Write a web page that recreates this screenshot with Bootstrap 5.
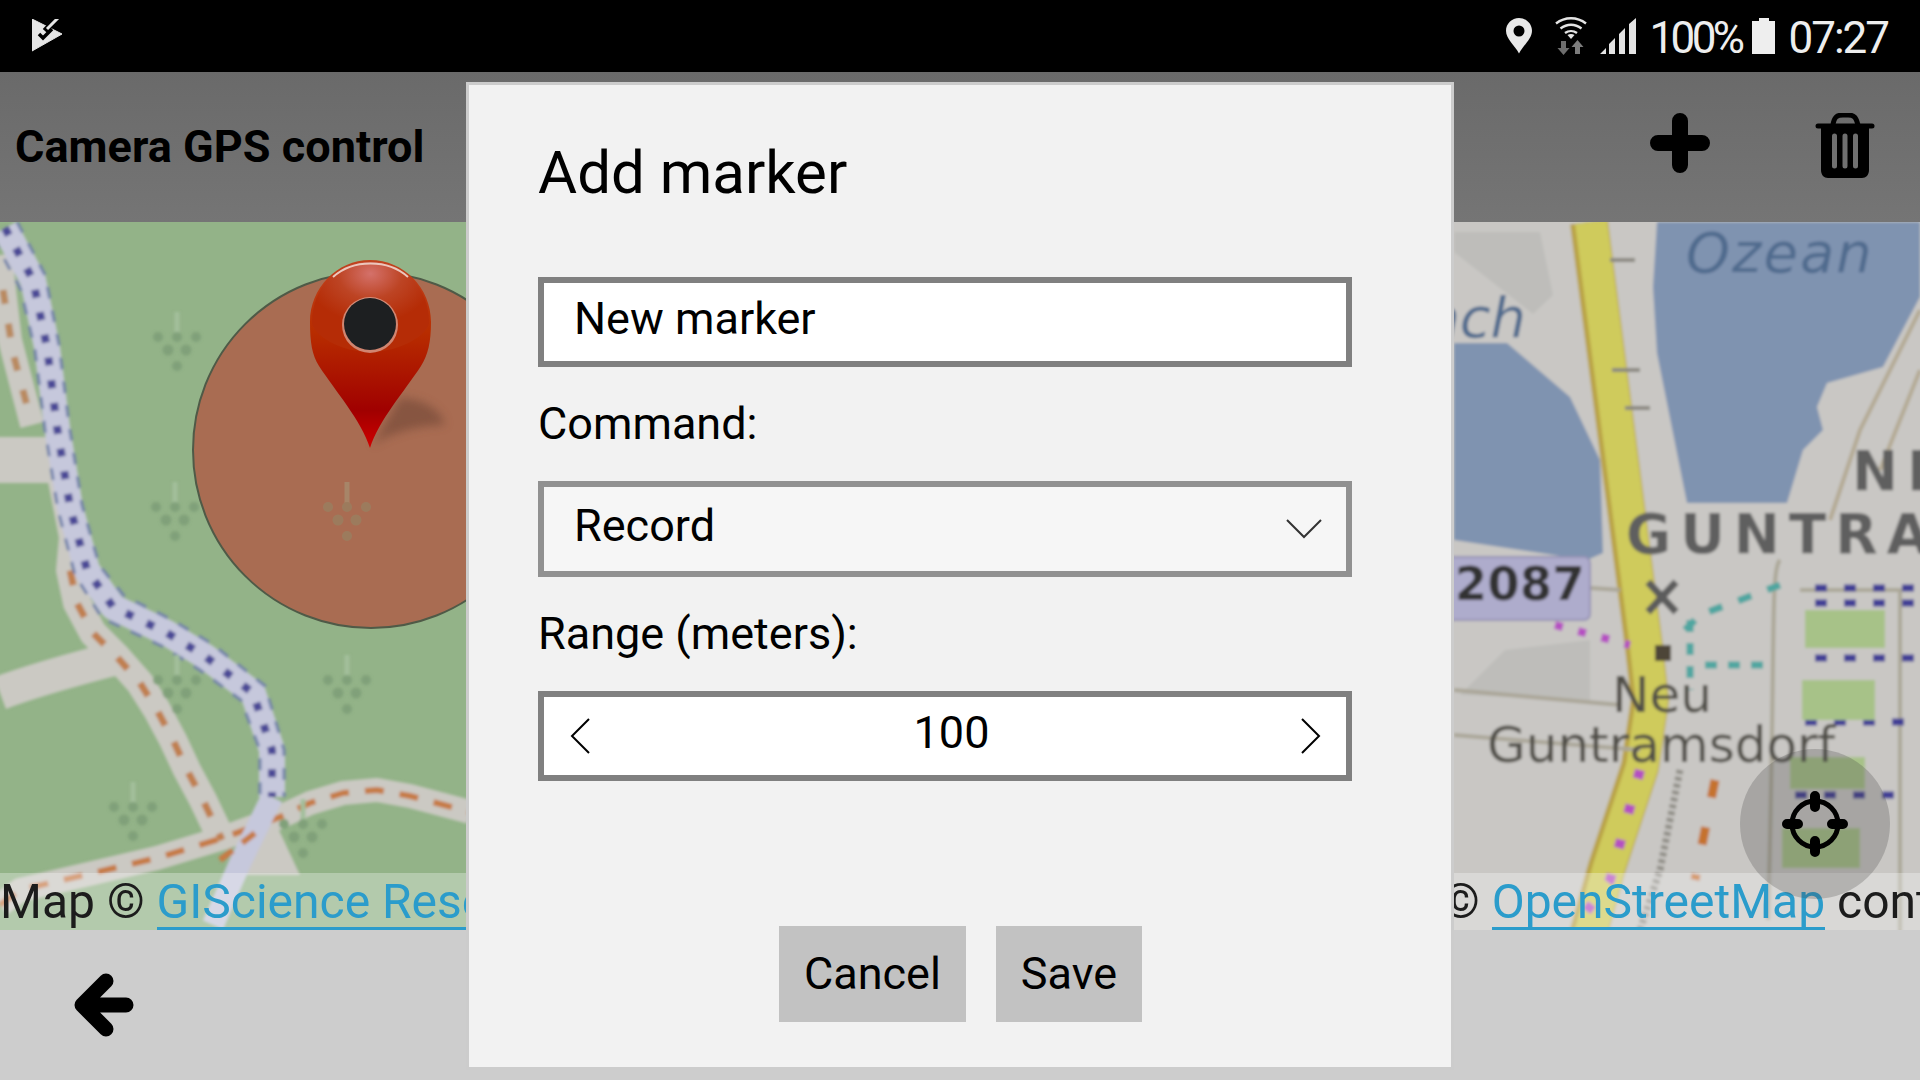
<!DOCTYPE html>
<html lang="en"><head><meta charset="utf-8"><title>Camera GPS control</title>
<link href="https://cdn.jsdelivr.net/npm/bootstrap@5.3.0/dist/css/bootstrap.min.css" rel="stylesheet">
<script src="https://cdn.jsdelivr.net/npm/bootstrap@5.3.0/dist/js/bootstrap.bundle.min.js"></script>
<style>
html,body{margin:0;width:1920px;height:1080px;overflow:hidden;background:#ccc;font-family:Roboto,"Liberation Sans",sans-serif;color:#000}
.screen{width:1920px;height:1080px}
.status-bar{height:72px;background:#000;color:#eee;padding:0 32px 0 32px}
.status-text{font-size:44px;line-height:1;font-weight:400;letter-spacing:-2px;margin-top:3px}
.status-pct{letter-spacing:-3.6px;margin-left:13px}
.status-time{margin-left:12px}
.status-batt{margin-left:11px}
.app-bar{height:150px;background:linear-gradient(#6a6a6a,#757575);padding:0 45px 0 15px}
.app-title{font-size:45px;line-height:1;font-weight:700;margin:0 0 2px;letter-spacing:.03px}
.icon-plus{margin-bottom:9px}
.icon-trash{margin-left:105px;margin-bottom:2px}
.map-area{height:708px;background:#c9c7c4}
.map-svg{display:block;width:1920px;height:708px}
.attribution{left:0;right:0;bottom:0;height:57px;background:rgba(255,255,255,.3);font-size:48px;line-height:57px;color:#1c1c1c;white-space:nowrap;overflow:hidden;padding-left:0;filter:blur(.5px)}
.attribution a{color:#2b9ccb;text-decoration:none;border-bottom:3px solid #2b9ccb;display:inline-block;line-height:50px}
.attr-left{flex:0 0 1442px;overflow:hidden}
.locate{width:150px;height:150px;left:1740px;top:527px;background:rgba(70,70,70,.26)}
.bottom-bar{height:150px;background:#cdcdcd;padding-left:74px}
.dialog{left:466px;top:82px;width:988px;height:988px;background:#f2f2f2;border:3px solid #ccc;padding:58px 99px 45px 69px}
.dialog-title{font-size:60px;line-height:1;font-weight:400;margin:0 0 74px;letter-spacing:0}
.field{height:90px;border:6px solid #808080;border-radius:0;background:#fff;font-size:45px;line-height:1;padding:0 30px;box-shadow:none;color:#000}
.field-text{padding-bottom:7px}
.field-select{height:96px;border-color:#919191;background:#f6f6f6;padding-right:24px}
.field-range{padding:0 25px 0 26px}
.field-range .val{padding:0 0 7px 12px}
.field-label{font-size:45px;line-height:1;margin:34px 0 35px;display:block;padding:0}
.dlg-actions{margin-right:-31px}
.dlg-btn{background:#c2c2c2;border:0;border-radius:0;height:96px;padding:0 25px 2px;font-size:45px;line-height:1;color:#000}
.dlg-btn:hover{background:#c2c2c2;color:#000}
.gap-30{gap:30px}
</style></head>
<body>
<div class="screen position-relative d-flex flex-column">
  <div class="status-bar d-flex align-items-center">
    <svg width="32" height="34" viewBox="0 0 32 34"><path d="M0 0 30 15 0 32Z" fill="#e6e6e6" stroke="#e6e6e6" stroke-linejoin="round"/><path d="M7 15 11 19 20 10" fill="none" stroke="#000" stroke-width="3.5"/><path d="M13 12 25 -1" fill="none" stroke="#000" stroke-width="6"/><path d="M15 10 26 -1" fill="none" stroke="#e6e6e6" stroke-width="3"/></svg>
    <div class="ms-auto d-flex align-items-center">
      <svg width="26" height="36" viewBox="0 0 26 36"><path fill-rule="evenodd" d="M13 0C5.800 0 0 5.700 0 12.800 0 21 8.500 27 13 35.500 17.500 27 26 21 26 12.800 26 5.700 20.200 0 13 0ZM13 7.500A5.500 5.500 0 1 1 13 18.500 5.500 5.500 0 0 1 13 7.500Z" fill="#e8e8e8"/></svg>
      <svg width="32" height="38" viewBox="0 0 32 38" style="margin-left:23px"><g fill="none" stroke="#e4e4e4" stroke-width="2.400"><path d="M1 6.500C10-.5 22-.5 31 6.500"/><path d="M5.500 11.500C12 6.500 20 6.500 26.500 11.500"/><path d="M10 16C13.500 13.500 18.500 13.500 22 16"/></g><path d="M16 22 12.500 18C14.500 16.500 17.500 16.500 19.500 18Z" fill="#e4e4e4"/><path d="M6 24h5v7h3.500L8.500 38 2.500 31H6Z" fill="#6d6d6d"/><path d="M24 38h-5v-7h-3.500l6-7 6 7H24Z" transform="translate(1 -1)" fill="#7c7c7c"/></svg>
      <svg width="36" height="36" viewBox="0 0 36 36" style="margin-left:13px"><path d="M0 36 6 30V36ZM9 36V26L15 20V36ZM19 36V16L25 10V36ZM29 36V6L36 0V36Z" fill="#e4e4e4"/></svg>
      <span class="status-text status-pct">100%</span>
      <svg class="status-batt" width="24" height="36" viewBox="0 0 24 36"><path d="M7 0H17V3H23V36H0V3H7Z" fill="#eee"/></svg>
      <span class="status-text status-time">07:27</span>
    </div>
  </div>
  <div class="app-bar d-flex align-items-center">
    <h1 class="app-title">Camera GPS control</h1>
    <div class="ms-auto d-flex align-items-center">
      <svg class="icon-plus" width="60" height="60" viewBox="0 0 60 60"><path d="M30 8V52M8 30H52" stroke="#000" stroke-width="16" stroke-linecap="round"/></svg>
      <svg class="icon-trash" width="60" height="66" viewBox="0 0 60 66"><path d="M3 13H57" stroke="#000" stroke-width="5" stroke-linecap="round"/><path d="M18 12C19 4 22 2 28 2H33C39 2 41 4 43 12" fill="none" stroke="#000" stroke-width="5"/><path fill-rule="evenodd" d="M6 13H54V57C54 62 51 65 47 65H13C9 65 6 62 6 57ZM17 23V53A2.500 2.500 0 0 0 22 53V23A2.500 2.500 0 0 0 17 23ZM27.500 23V53A2.500 2.500 0 0 0 32.500 53V23A2.500 2.500 0 0 0 27.500 23ZM38 23V53A2.500 2.500 0 0 0 43 53V23A2.500 2.500 0 0 0 38 23Z" fill="#000"/></svg>
    </div>
  </div>
  <div class="map-area position-relative">
    <svg class="map-svg" viewBox="0 222 1920 708" xmlns="http://www.w3.org/2000/svg">
      <defs>
        <filter id="soft" x="-2%" y="-2%" width="104%" height="104%"><feGaussianBlur stdDeviation="1.6"/></filter>
        <filter id="softer" x="-30%" y="-30%" width="160%" height="160%"><feGaussianBlur stdDeviation="5"/></filter>
        <radialGradient id="pinHi" cx=".5" cy=".13" r=".55"><stop offset="0" stop-color="#d4716a"/><stop offset=".5" stop-color="#bd4424"/><stop offset="1" stop-color="#b52c06"/></radialGradient>
        <linearGradient id="pinBody" x1="0" y1="0" x2="0" y2="1"><stop offset="0" stop-color="#c0431f"/><stop offset=".38" stop-color="#b82d00"/><stop offset=".8" stop-color="#a00000"/><stop offset="1" stop-color="#d00000"/></linearGradient>
        <g id="vine" fill="none"><path d="M0 -28V-2" stroke="#a3bf9b" stroke-width="5"/><g fill="#80a079"><circle cx="-19" cy="-3" r="5"/><circle cx="0" cy="-3" r="5"/><circle cx="19" cy="-3" r="5"/><circle cx="-9" cy="10" r="5.500"/><circle cx="9" cy="10" r="5.500"/><circle cx="0" cy="26" r="5"/></g></g>
      </defs>
      <rect x="0" y="222" width="470" height="708" fill="#93b388"/>
      <g filter="url(#soft)">
        <g fill="none" stroke-linecap="butt" stroke-linejoin="round">
          <path d="M-5 460H55" stroke="#cbc9c3" stroke-width="46"/>
          <path d="M0 255 10 340 32 425" stroke="#cbc9c3" stroke-width="24"/>
          <path d="M0 693C40 678 80 668 117 658" stroke="#cbc9c3" stroke-width="34"/>
          <path d="M60 470 73 537 70 570 77 603 93 633 117 657 140 683 157 710 173 740 187 770 203 800 222 840" stroke="#cbc9c3" stroke-width="28"/>
          <path d="M0 905 20 890 93 873 157 858 223 838 280 817 310 803 343 793 377 790 410 796 470 812" stroke="#cbc9c3" stroke-width="24"/>
          <path d="M272 815 300 875H245Z" fill="#cbc9c3" stroke="none"/>
          <path d="M3 290 13 353 30 417" stroke="#b98a60" stroke-width="7" stroke-dasharray="14 20"/>
          <path d="M60 470 73 537 70 570 77 603 93 633 117 657 140 683 157 710 173 740 187 770 203 800 222 840" stroke="#c07f50" stroke-width="7" stroke-dasharray="15 19"/>
          <path d="M0 905 20 890 93 873 157 858 223 838 280 817 310 803 343 793 377 790 410 796 470 812" stroke="#c67a45" stroke-width="6" stroke-dasharray="19 16"/>
          <path d="M5 228 33 280 47 347 57 427 70 507 87 570 113 607 167 633 206 657 253 693 272 750 272 797" stroke="#c6c8dc" stroke-width="26"/>
          <path d="M272 797 240 863 213 925" stroke="#c6c8dc" stroke-width="22"/>
          <path d="M5 228 33 280 47 347 57 427 70 507 87 570 113 607 167 633 206 657 253 693 272 750 272 797" stroke="#4b4a96" stroke-width="8" stroke-dasharray="8 15"/>
          <path d="M-7 238 21 290 35 350 45 430 58 510 75 575 102 618 162 646 200 670 241 700 260 750 260 797" stroke="#6f80aa" stroke-width="3" stroke-dasharray="12 12"/>
          <path d="M17 222 45 275 59 345 69 425 82 505 99 565 124 596 172 620 212 644 265 686 284 750 284 797" stroke="#6f80aa" stroke-width="3" stroke-dasharray="12 12"/>
          <path d="M220 860 263 827" stroke="#c67a45" stroke-width="6" stroke-dasharray="16 12"/>
        </g>
        <use href="#vine" x="177" y="340"/><use href="#vine" x="175" y="510"/><use href="#vine" x="177" y="683"/><use href="#vine" x="133" y="810"/><use href="#vine" x="303" y="827"/><use href="#vine" x="347" y="683"/>
        <rect x="1454" y="222" width="466" height="708" fill="#c9c7c4"/>
        <path d="M1454 232H1540L1553 295 1533 314 1454 252Z" fill="#bebdba"/>
        <path d="M1454 343H1507L1570 397 1600 460 1603 553 1587 560 1454 540Z" fill="#7f93b0"/>
        <path d="M1657 222H1920V297L1883 367 1827 383 1817 407 1823 430 1803 450 1787 503H1687L1657 353 1653 287Z" fill="#7f93b0"/>
        <path d="M1505 650 1590 640 1590 700 1460 695Z" fill="#bebdba"/>
        <g fill="none">
          <path d="M1602 222 1660 670" stroke="#8e8c85" stroke-width="9" stroke-dasharray="20 3"/>
          <path d="M1589 222 1644 647 1650 700 1640 767 1607 867 1588 935" stroke="#b9a347" stroke-width="38"/>
          <path d="M1591 222 1646 647 1652 700 1642 767 1609 867 1590 935" stroke="#cfcb5c" stroke-width="32"/>
          <path d="M1680 770 1660 870 1640 930" stroke="#8e8c85" stroke-width="7" stroke-dasharray="4 3"/>
          <path d="M1610 260H1635M1612 370H1640M1625 408H1650" stroke="#8a8880" stroke-width="4"/>
          <path d="M1920 310 1860 430 1830 520M1920 370 1880 470" stroke="#b3a993" stroke-width="4"/>
          <path d="M1454 570 1475 580 1620 590M1454 690 1620 705M1454 735 1640 750" stroke="#aaa698" stroke-width="4"/>
          <path d="M1780 560C1770 570 1776 640 1768 920M1800 590 1900 590V940" stroke="#aba797" stroke-width="4"/>
          <path d="M1685 630 1700 615 1780 585" stroke="#4fa6a0" stroke-width="7" stroke-dasharray="14 17"/>
          <path d="M1690 620V690M1705 665H1770" stroke="#4fa6a0" stroke-width="7" stroke-dasharray="12 11"/>
          <path d="M1555 625 1630 645" stroke="#b54fc2" stroke-width="8" stroke-dasharray="8 16"/>
          <path d="M1640 770 1610 880 1580 920" stroke="#b54fc2" stroke-width="10" stroke-dasharray="9 27"/>
          <path d="M1815 588H1920M1815 603H1920M1815 658H1920M1805 722H1920M1795 795H1910" stroke="#3f3c95" stroke-width="7" stroke-dasharray="12 17"/>
          <path d="M1715 780 1695 880" stroke="#c5722f" stroke-width="9" stroke-dasharray="18 30"/>
          <path d="M1648 582 1676 612M1676 582 1648 612" stroke="#5b5b5b" stroke-width="7"/>
        </g>
        <rect x="1655" y="645" width="16" height="16" fill="#4d4437"/>
        <rect x="1805" y="610" width="80" height="38" fill="#a7c288"/><rect x="1802" y="680" width="73" height="40" fill="#a7c288"/><rect x="1790" y="757" width="75" height="32" fill="#a7c288"/><rect x="1782" y="828" width="78" height="40" fill="#a7c288"/>
        <rect x="1440" y="557" width="150" height="63" rx="6" fill="#aeaccc" stroke="#9693b5" stroke-width="2"/>
        <g font-family="DejaVu Sans,sans-serif">
          <text x="1686" y="272" font-size="56" font-style="italic" fill="#4f6a8d" letter-spacing="2">Ozean</text>
          <text x="1387" y="337" font-size="56" font-style="italic" fill="#4f6a8d">Bach</text>
          <text x="1626" y="553" font-size="55" font-weight="700" fill="#5e5e5e" letter-spacing="9">GUNTRA</text>
          <text x="1852" y="490" font-size="55" font-weight="700" fill="#5e5e5e" letter-spacing="9">NI</text>
          <text x="1455" y="600" font-size="46" font-weight="700" fill="#333" letter-spacing=".5">2087</text>
          <text x="1612" y="712" font-size="50" fill="#504e47">Neu</text>
          <text x="1487" y="762" font-size="50" fill="#504e47">Guntramsdorf</text>
        </g>
      </g>
      <circle cx="371" cy="450" r="178" fill="#a96c52" stroke="#4f5a47" stroke-width="2"/>
      <use href="#vine" x="347" y="510" opacity=".3"/>
      <path d="M372 446C385 435 415 425 445 425 440 405 415 398 400 398Z" fill="#744a38" opacity=".65" filter="url(#softer)"/>
      <path d="M370 448C361 420 336 392 319 366 312 355 310 342 310 322 310 288 337 260 370 260 404 260 431 288 431 322 431 342 428 355 421 366 404 392 379 420 370 448Z" fill="url(#pinBody)"/>
      <path d="M370 262C337 262 312 288 312 322 312 335 341 352 370 352 399 352 429 335 429 322 429 288 404 262 370 262Z" fill="url(#pinHi)"/>
      <path d="M333 277C353 259 388 259 408 277" fill="none" stroke="#ecc7bd" stroke-width="2"/>
      <circle cx="370" cy="325" r="28" fill="#e8d0c8" opacity=".55"/>
      <circle cx="370" cy="324" r="26" fill="#1d1f21"/>
    </svg>
    <div class="attribution position-absolute d-flex">
      <div class="attr-left">Map © <a href="#">GIScience Research Group</a></div>
      <div>© <a href="#">OpenStreetMap</a> contributors</div>
    </div>
    <div class="locate position-absolute rounded-circle d-flex align-items-center justify-content-center">
      <svg width="66" height="66" viewBox="0 0 66 66"><circle cx="33" cy="33" r="23" fill="none" stroke="#000" stroke-width="5"/><path d="M33 5V16M33 50V61M5 33H16M50 33H61" stroke="#000" stroke-width="10" stroke-linecap="round"/></svg>
    </div>
  </div>
  <div class="bottom-bar d-flex align-items-center">
    <svg width="60" height="64" viewBox="0 0 60 64"><path d="M32 8 8 32 32 56M10 32H52" fill="none" stroke="#000" stroke-width="15" stroke-linecap="round" stroke-linejoin="round"/></svg>
  </div>
  <div class="dialog position-absolute d-flex flex-column" role="dialog">
    <h2 class="dialog-title">Add marker</h2>
    <div class="form-control field d-flex align-items-center"><span class="field-text">New marker</span></div>
    <label class="field-label">Command:</label>
    <div class="form-control field field-select d-flex align-items-center justify-content-between">
      <span class="field-text">Record</span>
      <svg width="36" height="20" viewBox="0 0 36 20"><path d="M1 1 18 18 35 1" fill="none" stroke="#333" stroke-width="2"/></svg>
    </div>
    <label class="field-label">Range (meters):</label>
    <div class="form-control field field-range d-flex align-items-center justify-content-between">
      <svg width="20" height="36" viewBox="0 0 20 36"><path d="M19 1 2 18 19 35" fill="none" stroke="#000" stroke-width="2"/></svg>
      <span class="val">100</span>
      <svg width="20" height="36" viewBox="0 0 20 36"><path d="M1 1 18 18 1 35" fill="none" stroke="#000" stroke-width="2"/></svg>
    </div>
    <div class="mt-auto d-flex justify-content-center gap-30 dlg-actions">
      <button class="btn dlg-btn" type="button">Cancel</button>
      <button class="btn dlg-btn" type="button">Save</button>
    </div>
  </div>
</div>
</body></html>
